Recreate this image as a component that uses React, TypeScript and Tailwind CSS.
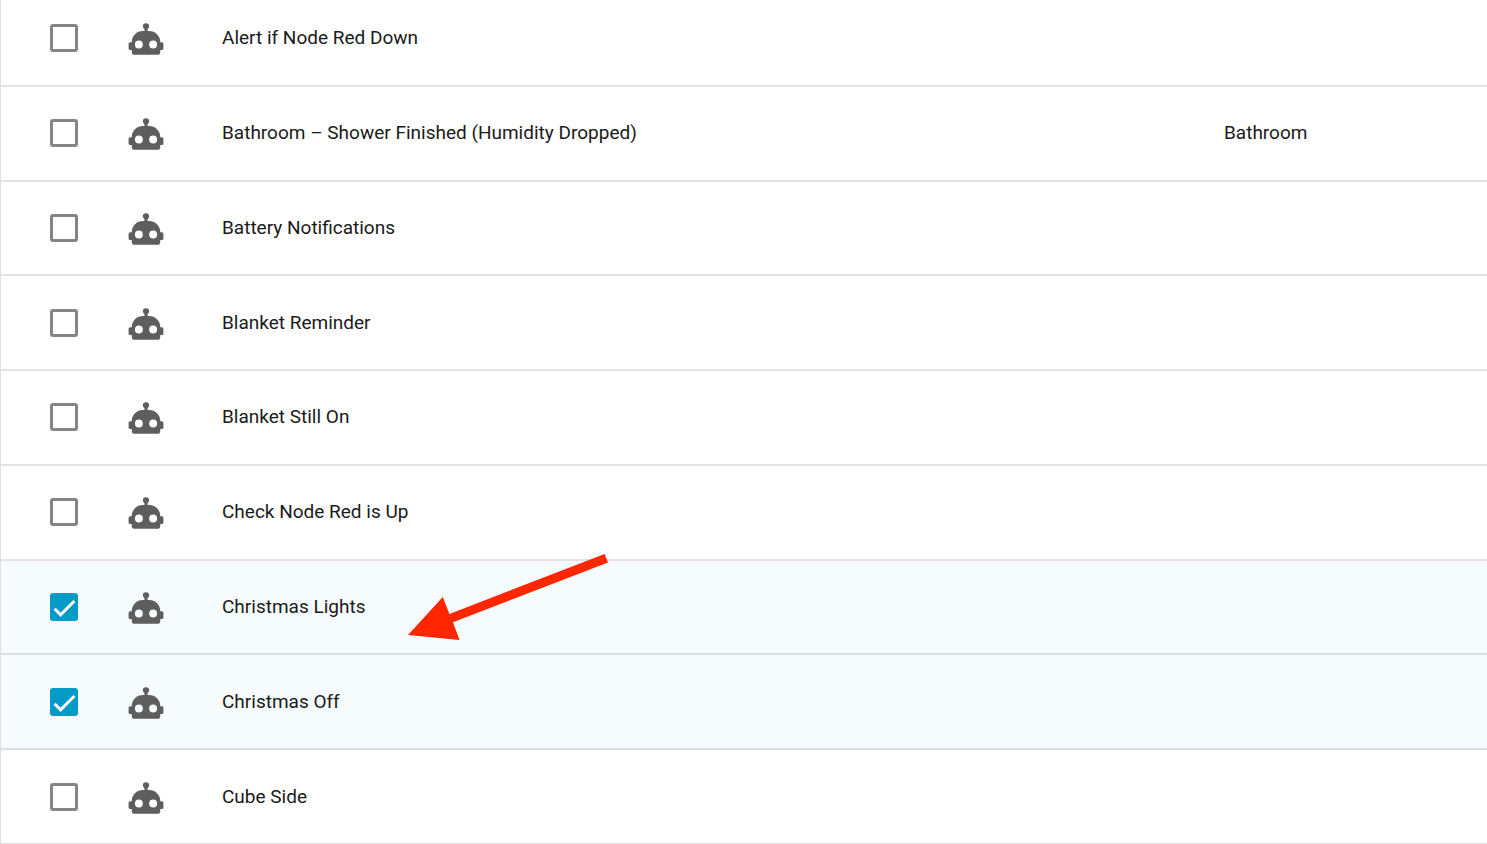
import { useState } from "react";

type Automation = {
  id: string;
  name: string;
  area?: string;
  pointed?: boolean;
};

const automations: Automation[] = [
  { id: "node-red-down", name: "Alert if Node Red Down" },
  { id: "shower-finished", name: "Bathroom – Shower Finished (Humidity Dropped)", area: "Bathroom" },
  { id: "battery", name: "Battery Notifications" },
  { id: "blanket-reminder", name: "Blanket Reminder" },
  { id: "blanket-on", name: "Blanket Still On" },
  { id: "node-red-up", name: "Check Node Red is Up" },
  { id: "christmas-lights", name: "Christmas Lights", pointed: true },
  { id: "christmas-off", name: "Christmas Off" },
  { id: "cube-side", name: "Cube Side" },
];

function RobotIcon() {
  return (
    <svg viewBox="0 0 24 24" className="mt-0.5 block size-[38px] fill-[#5e5e5e]" aria-hidden="true">
      <path d="M12,2A2,2 0 0,1 14,4C14,4.74 13.6,5.39 13,5.73V7H14A7,7 0 0,1 21,14H22A1,1 0 0,1 23,15V18A1,1 0 0,1 22,19H21V20A2,2 0 0,1 19,22H5A2,2 0 0,1 3,20V19H2A1,1 0 0,1 1,18V15A1,1 0 0,1 2,14H3A7,7 0 0,1 10,7H11V5.73C10.4,5.39 10,4.74 10,4A2,2 0 0,1 12,2M7.5,13A2.5,2.5 0 0,0 5,15.5A2.5,2.5 0 0,0 7.5,18A2.5,2.5 0 0,0 10,15.5A2.5,2.5 0 0,0 7.5,13M16.5,13A2.5,2.5 0 0,0 14,15.5A2.5,2.5 0 0,0 16.5,18A2.5,2.5 0 0,0 19,15.5A2.5,2.5 0 0,0 16.5,13Z" />
    </svg>
  );
}

function Arrow() {
  return (
    <svg
      viewBox="0 0 200 88"
      className="pointer-events-none absolute -top-2 left-[186px] z-10 h-[88px] w-[200px] fill-[#ff2600]"
      aria-hidden="true"
    >
      <path d="M0 82 L34.8 44 L41.4 61 L196.6 1 L200 9.6 L45 69.3 L51.5 87 Z" />
    </svg>
  );
}

export default function App() {
  const [selected, setSelected] = useState<string[]>(["christmas-lights", "christmas-off"]);

  const toggle = (id: string) =>
    setSelected((current) =>
      current.includes(id) ? current.filter((item) => item !== id) : [...current, id],
    );

  return (
    <main className="h-screen overflow-hidden border-l border-[#e0e0e0] bg-white">
      <table className="-mt-2 h-[calc(100vh+9px)] w-full table-fixed border-separate border-spacing-0 font-['Roboto',sans-serif] text-[19px] leading-6 text-[#1a1a1a]">
        <colgroup>
          <col className="w-[126px]" />
          <col className="w-[95px]" />
          <col />
          <col className="w-[263px]" />
        </colgroup>
        <tbody>
          {automations.map(({ id, name, area, pointed }) => {
            const checked = selected.includes(id);
            const cell = "border-b-2 border-black/11 p-0 text-left align-middle font-normal";
            return (
              <tr key={id} className={checked ? "bg-[#f6fbfe]" : "bg-white"}>
                <td className={cell}>
                  <span className="ml-[49px] grid size-7">
                    <input
                      id={id}
                      type="checkbox"
                      checked={checked}
                      onChange={() => toggle(id)}
                      className="col-start-1 row-start-1 size-7 appearance-none rounded-[3px] border-[3px] border-[#858585] checked:border-[#039ac8] checked:bg-[#039ac8]"
                    />
                    {checked && (
                      <svg
                        viewBox="0 0 28 28"
                        className="pointer-events-none col-start-1 row-start-1 size-7 fill-none stroke-white stroke-3"
                        aria-hidden="true"
                      >
                        <path d="M4.6 15.8 L10.6 21.8 L24.4 8" />
                      </svg>
                    )}
                  </span>
                </td>
                <td className={cell}>
                  <RobotIcon />
                </td>
                <th scope="row" className={`${cell} relative`}>
                  <label htmlFor={id}>{name}</label>
                  {pointed && <Arrow />}
                </th>
                <td className={cell}>{area}</td>
              </tr>
            );
          })}
        </tbody>
      </table>
    </main>
  );
}
